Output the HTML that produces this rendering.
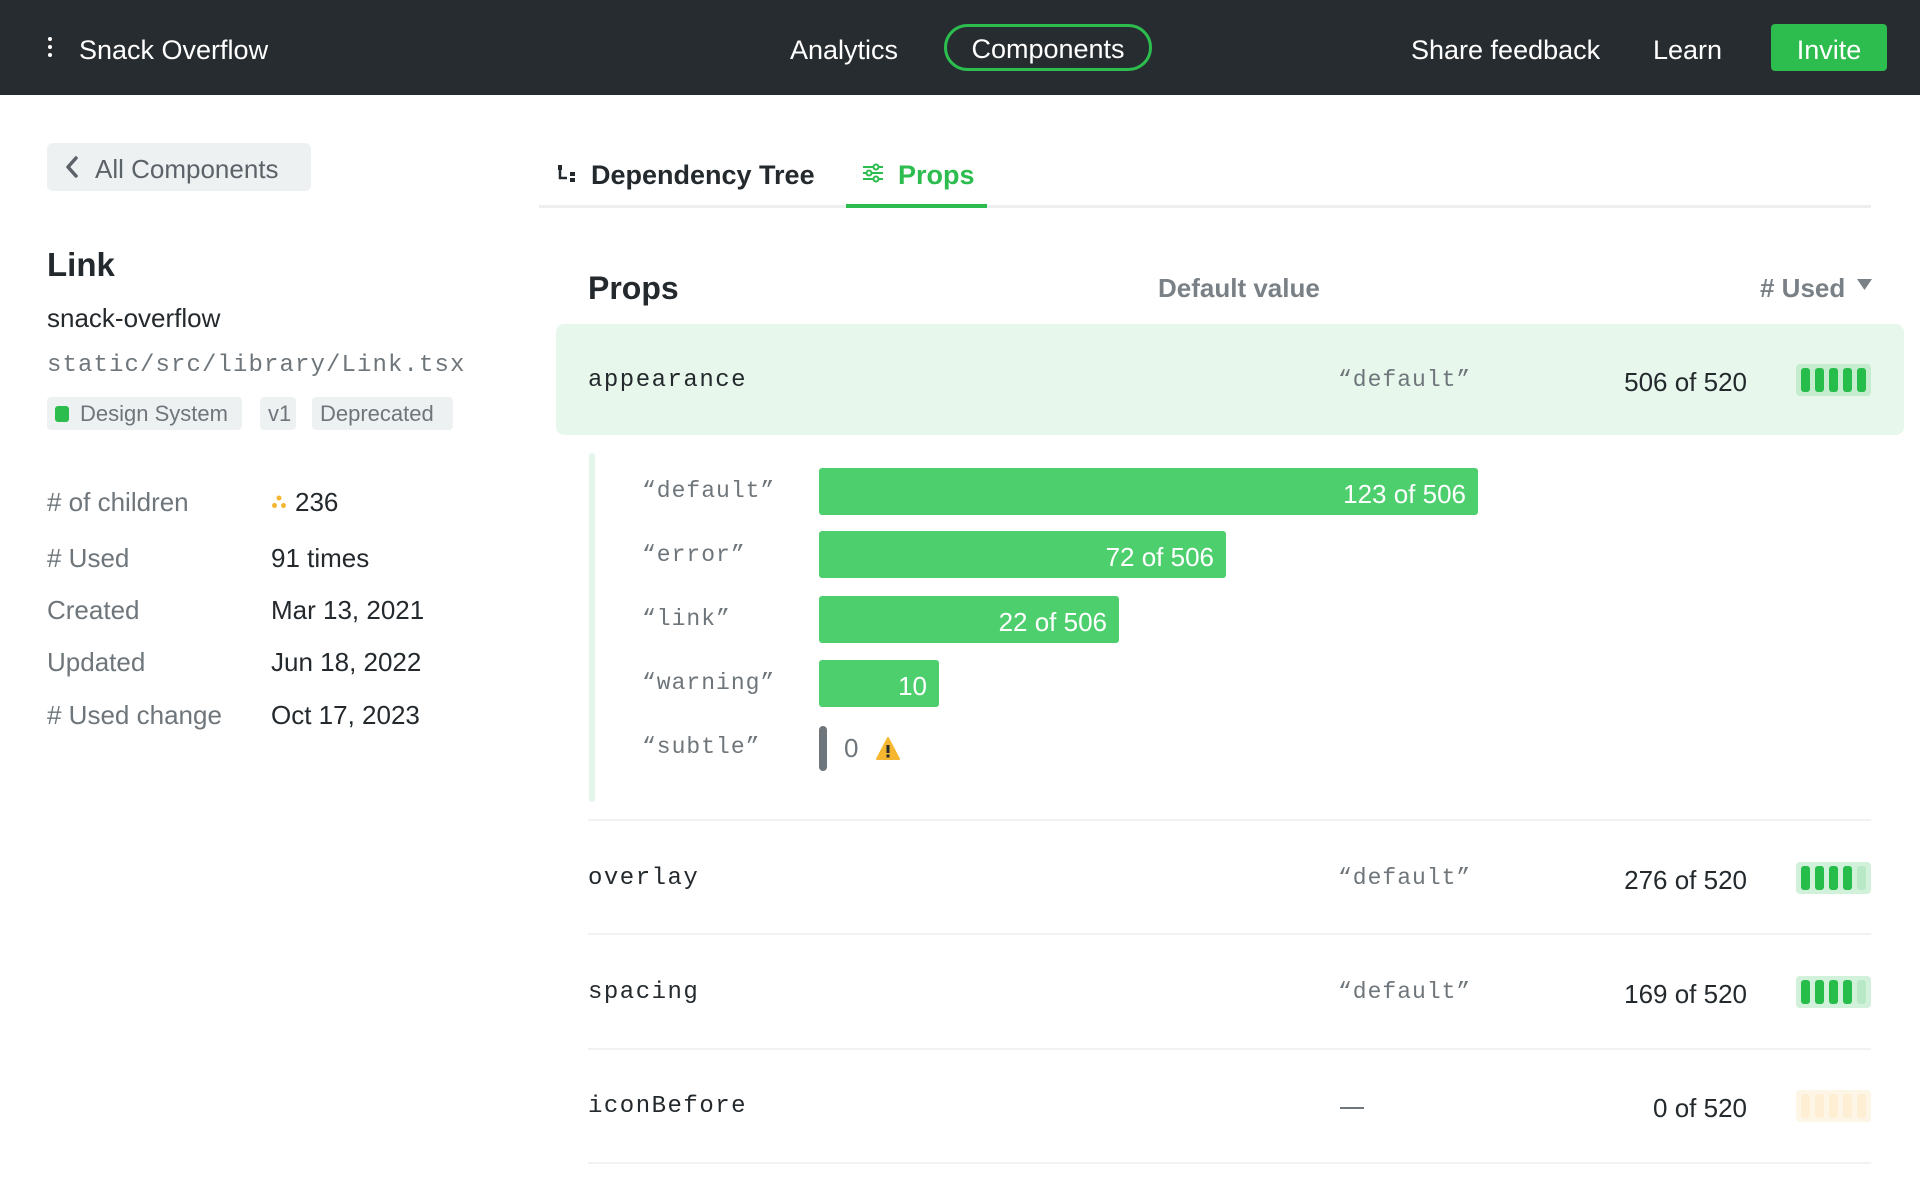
<!DOCTYPE html>
<html><head><meta charset="utf-8"><style>
*{box-sizing:border-box;margin:0;padding:0}
body{width:1920px;height:1184px;background:#fff;font-family:"Liberation Sans",sans-serif;color:#23292d;position:relative;overflow:hidden}
.a{position:absolute;white-space:nowrap}
.mono{font-family:"Liberation Mono",monospace}
.nav{position:absolute;left:0;top:0;width:1920px;height:95px;background:#262c2f}
.nt{color:#fff;font-size:27px;line-height:30px;top:35px}
.gray{color:#6e767b}
.tag{position:absolute;top:397px;height:33px;background:#eef1f2;border-radius:4px;color:#6e767b;font-size:22px;line-height:33px;padding:0 8px}
.lab{left:47px;font-size:26px;color:#6e767b}
.val{left:271px;font-size:26px;color:#23292d}
.bar{position:absolute;left:819px;height:47px;background:#4ecf6d;border-radius:3px;color:#fff;font-size:26px;line-height:52px;text-align:right;padding-right:12px}
.opt{left:642px;font-size:23px;color:#6e767b;letter-spacing:1px}
.hr{position:absolute;left:588px;width:1283px;height:2px;background:#f0f2f3}
.pv{font-size:24px;color:#23292d;letter-spacing:1.5px}
.dv{left:1338px;font-size:23px;color:#6e767b;letter-spacing:1px}
.cnt{right:173px;font-size:26px;color:#23292d;text-align:right}
.meter{position:absolute;left:1796px;width:75px;height:32px;border-radius:4px;background:#d2f1da;display:flex;gap:5px;padding:4px 5px}
.meter i{display:block;width:9px;height:24px;border-radius:3px;background:#27bd4a}
.meter i.l{background:#b8e8c5}
.meter.y{background:#fdf5e6}.meter.y i{background:#fdeed4}
</style></head><body>
<div class="nav"></div>
<div class="a" style="left:48px;top:37px;width:4px;height:22px">
 <div style="position:absolute;left:0;top:0;width:4px;height:4px;border-radius:2px;background:#fff"></div>
 <div style="position:absolute;left:0;top:8px;width:4px;height:4px;border-radius:2px;background:#fff"></div>
 <div style="position:absolute;left:0;top:16px;width:4px;height:4px;border-radius:2px;background:#fff"></div>
</div>
<div class="a nt" style="left:79px">Snack Overflow</div>
<div class="a nt" style="left:790px">Analytics</div>
<div class="a" style="left:944px;top:24px;width:208px;height:47px;border:3px solid #2dbd4e;border-radius:24px;color:#fff;font-size:27px;line-height:45px;text-align:center">Components</div>
<div class="a nt" style="left:1411px">Share feedback</div>
<div class="a nt" style="left:1653px">Learn</div>
<div class="a" style="left:1771px;top:24px;width:116px;height:47px;background:#2dbd4e;border-radius:4px;color:#fff;font-size:27px;line-height:52px;text-align:center">Invite</div>

<div class="a" style="left:47px;top:143px;width:264px;height:48px;background:#eef1f2;border-radius:6px;color:#5c6368;font-size:26px;line-height:52px;padding-left:48px">All Components</div>
<svg class="a" style="left:64px;top:155px" width="16" height="24" viewBox="0 0 16 24"><path d="M12 3 L4 12 L12 21" fill="none" stroke="#5c6368" stroke-width="3.5" stroke-linecap="round" stroke-linejoin="round"/></svg>
<div class="a" style="left:47px;top:246px;font-size:33px;font-weight:bold">Link</div>
<div class="a" style="left:47px;top:303px;font-size:26px">snack-overflow</div>
<div class="a mono gray" style="left:47px;top:352px;font-size:24px;letter-spacing:1.1px">static/src/library/Link.tsx</div>
<div class="tag" style="left:47px;width:195px;padding-left:33px">Design System</div>
<div class="a" style="left:55px;top:406px;width:14px;height:16px;border-radius:3px;background:#2dbd4e"></div>
<div class="tag" style="left:260px;width:36px">v1</div>
<div class="tag" style="left:312px;width:141px">Deprecated</div>

<div class="a lab" style="top:487px"># of children</div>
<div class="a lab" style="top:543px"># Used</div>
<div class="a lab" style="top:595px">Created</div>
<div class="a lab" style="top:647px">Updated</div>
<div class="a lab" style="top:700px"># Used change</div>
<svg class="a" style="left:271px;top:494px" width="16" height="16" viewBox="0 0 16 16"><circle cx="8" cy="4" r="2.5" fill="#f5b731"/><circle cx="3.5" cy="11.5" r="2.5" fill="#f5b731"/><circle cx="12.5" cy="11.5" r="2.5" fill="#f5b731"/></svg>
<div class="a val" style="top:487px;left:295px">236</div>
<div class="a val" style="top:543px">91 times</div>
<div class="a val" style="top:595px">Mar 13, 2021</div>
<div class="a val" style="top:647px">Jun 18, 2022</div>
<div class="a val" style="top:700px">Oct 17, 2023</div>

<div class="a" style="left:539px;top:205px;width:1332px;height:3px;background:#eceeef"></div>
<div class="a" style="left:846px;top:204px;width:141px;height:4px;background:#2dbd4e"></div>
<svg class="a" style="left:557px;top:164px" width="20" height="20" viewBox="0 0 20 20"><rect x="1" y="1" width="4" height="5" fill="#23292d"/><path d="M3 6 V14 H10" fill="none" stroke="#23292d" stroke-width="2.5"/><rect x="13" y="8" width="5" height="4" fill="#23292d"/><rect x="13" y="14" width="5" height="4" fill="#23292d"/></svg>
<div class="a" style="left:591px;top:160px;font-size:27px;font-weight:bold">Dependency Tree</div>
<svg class="a" style="left:862px;top:163px" width="22" height="20" viewBox="0 0 22 20"><g stroke="#2dbd4e" stroke-width="2" fill="none"><path d="M1 4H21M1 10H21M1 16H21"/><circle cx="14" cy="4" r="2.5" fill="#fff"/><circle cx="7" cy="10" r="2.5" fill="#fff"/><circle cx="14" cy="16" r="2.5" fill="#fff"/></g></svg>
<div class="a" style="left:898px;top:160px;font-size:27px;font-weight:bold;color:#2dbd4e">Props</div>

<div class="a" style="left:588px;top:270px;font-size:32px;font-weight:bold">Props</div>
<div class="a" style="left:1158px;top:273px;font-size:26px;font-weight:bold;color:#7a8186">Default value</div>
<div class="a" style="left:1760px;top:273px;font-size:26px;font-weight:bold;color:#7a8186"># Used</div>
<svg class="a" style="left:1857px;top:279px" width="15" height="12" viewBox="0 0 15 12"><path d="M0 0H15L7.5 11Z" fill="#7a8186"/></svg>

<div class="a" style="left:556px;top:324px;width:1348px;height:111px;background:#e8f7ec;border-radius:8px"></div>
<div class="a mono pv" style="left:588px;top:367px">appearance</div>
<div class="a mono dv" style="top:367px">“default”</div>
<div class="a cnt" style="top:367px">506 of 520</div>
<div class="meter" style="top:364px;background:#c6eccf"><i></i><i></i><i></i><i></i><i></i></div>

<div class="a" style="left:589px;top:453px;width:6px;height:349px;background:#e6f5ea;border-radius:3px"></div>
<div class="a mono opt" style="top:478px">“default”</div>
<div class="a mono opt" style="top:542px">“error”</div>
<div class="a mono opt" style="top:606px">“link”</div>
<div class="a mono opt" style="top:670px">“warning”</div>
<div class="a mono opt" style="top:734px">“subtle”</div>
<div class="bar" style="top:468px;width:659px">123 of 506</div>
<div class="bar" style="top:531px;width:407px">72 of 506</div>
<div class="bar" style="top:596px;width:300px">22 of 506</div>
<div class="bar" style="top:660px;width:120px">10</div>
<div class="a" style="left:819px;top:726px;width:8px;height:45px;background:#6e767b;border-radius:4px"></div>
<div class="a" style="left:844px;top:733px;font-size:26px;color:#6e767b">0</div>
<svg class="a" style="left:875px;top:736px" width="26" height="25" viewBox="0 0 26 25"><path d="M13 2 L24 23 H2 Z" fill="#f5b731" stroke="#f5b731" stroke-width="2" stroke-linejoin="round"/><rect x="11.5" y="9" width="3" height="8" fill="#23292d"/><rect x="11.5" y="18.5" width="3" height="3" fill="#23292d"/></svg>

<div class="hr" style="top:819px"></div>
<div class="a mono pv" style="left:588px;top:865px">overlay</div>
<div class="a mono dv" style="top:865px">“default”</div>
<div class="a cnt" style="top:865px">276 of 520</div>
<div class="meter" style="top:862px"><i></i><i></i><i></i><i></i><i class="l"></i></div>
<div class="hr" style="top:933px"></div>
<div class="a mono pv" style="left:588px;top:979px">spacing</div>
<div class="a mono dv" style="top:979px">“default”</div>
<div class="a cnt" style="top:979px">169 of 520</div>
<div class="meter" style="top:976px"><i></i><i></i><i></i><i></i><i class="l"></i></div>
<div class="hr" style="top:1048px"></div>
<div class="a mono pv" style="left:588px;top:1093px">iconBefore</div>
<div class="a" style="left:1340px;top:1107px;width:24px;height:2px;background:#6e767b"></div>
<div class="a cnt" style="top:1093px">0 of 520</div>
<div class="meter y" style="top:1090px"><i></i><i></i><i></i><i></i><i></i></div>
<div class="hr" style="top:1162px"></div>
</body></html>
